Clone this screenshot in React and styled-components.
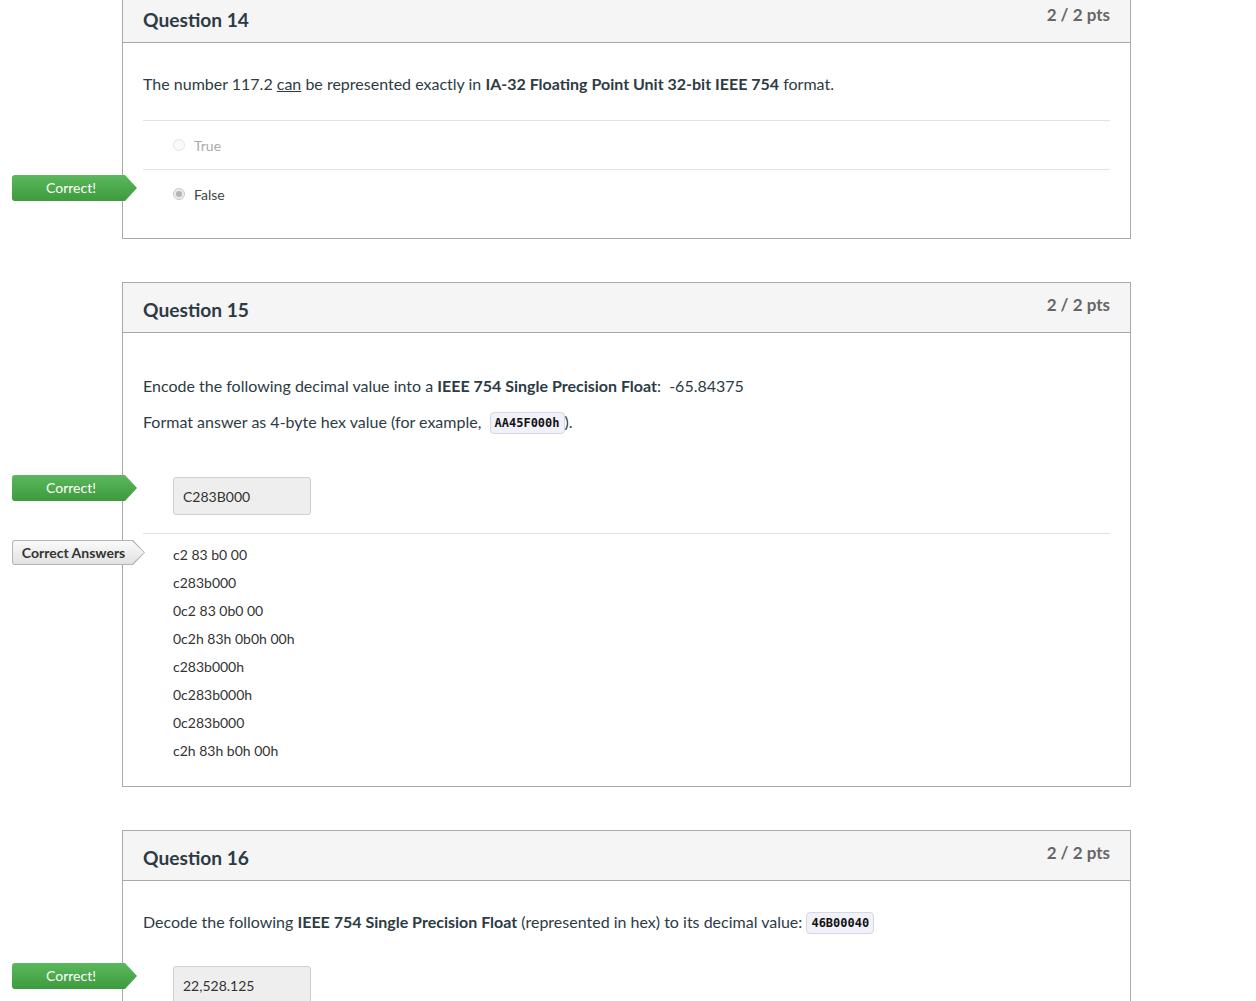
import React from 'react';
import styled, { createGlobalStyle, css } from 'styled-components';

const GlobalStyle = createGlobalStyle`
  body {
    margin: 0;
    background: #fff;
    font-family: Lato, 'Open Sans', 'Liberation Sans', sans-serif;
    color: #2d3b45;
  }
`;

export const Page = styled.div`
  display: flex;
  flex-direction: column;
  gap: 43px;
  margin-top: -8px;
  padding: 0 0 60px 122px;
`;

export const Card = styled.section`
  width: 1007px;
  border: 1px solid #a9a9a9;
  background: #fff;
`;

export const CardHeader = styled.header`
  display: flex;
  justify-content: space-between;
  align-items: flex-start;
  height: 49px;
  padding: 0 20px;
  background: #f5f5f5;
  border-bottom: 1px solid #a9a9a9;
`;

export const Title = styled.h2`
  margin: 0;
  padding-top: 15px;
  font-size: 19.2px;
  line-height: 24px;
  font-weight: 700;
  color: #2d3b45;
`;

export const Points = styled.div`
  padding-top: 12px;
  font-size: 17px;
  line-height: 20px;
  font-weight: 700;
  color: #666;
`;

export const CardBody = styled.div`
  padding: 29px 20px 20px;
`;

export const QuestionText = styled.div`
  display: flow-root;
  font-size: 16px;
  line-height: 24px;

  p {
    margin: 12px 0;
  }
`;

export const Code = styled.code`
  display: inline-block;
  padding: 0 4px;
  font-family: 'DejaVu Sans Mono', 'Liberation Mono', monospace;
  font-size: 12px;
  line-height: 20px;
  font-weight: 700;
  color: #111;
  background: #f1f1f9;
  border: 1px solid #d6d6e4;
  border-radius: 4px;
  vertical-align: 1px;
`;

export const Choices = styled.div`
  margin-top: 24px;
`;

export const Choice = styled.div`
  position: relative;
  display: flex;
  align-items: center;
  gap: 9px;
  height: 48px;
  padding-left: 30px;
  border-top: 1px solid #e2e2e2;
  font-size: 14px;
  color: ${(p) => (p.$picked ? '#444' : '#aaa')};
`;

export const Radio = styled.span`
  position: relative;
  width: 12px;
  height: 12px;
  box-sizing: border-box;
  border-radius: 50%;
  border: 1px solid ${(p) => (p.$checked ? '#c9c9c9' : '#e4e4e4')};
  background: ${(p) => (p.$checked ? '#ececec' : '#fafafa')};

  ${(p) =>
    p.$checked &&
    css`
      &::after {
        content: '';
        position: absolute;
        left: 2px;
        top: 2px;
        width: 6px;
        height: 6px;
        border-radius: 50%;
        background: #b5b5b5;
      }
    `}
`;

export const InputRow = styled.div`
  position: relative;
  margin-top: ${(p) => p.$gap}px;
  padding: 0 0 ${(p) => (p.$divided ? 18 : 0)}px 30px;
  border-bottom: ${(p) => (p.$divided ? '1px solid #e2e2e2' : 'none')};
`;

export const AnswerBox = styled.div`
  width: 138px;
  height: 38px;
  box-sizing: border-box;
  display: flex;
  align-items: center;
  padding-left: 9px;
  font-size: 14px;
  color: #333;
  background: #eeeeee;
  border: 1px solid #cfcfcf;
  border-radius: 3px;
`;

export const AnswerList = styled.ul`
  position: relative;
  list-style: none;
  margin: 0;
  padding: 7px 0 1px 30px;
  font-size: 14px;
  line-height: 28px;
  color: #333;
`;

const arrow = 'polygon(0 0, calc(100% - 12px) 0, 100% 50%, calc(100% - 12px) 100%, 0 100%)';

export const Tag = styled.div`
  position: absolute;
  left: -131px;
  top: ${(p) => p.$top}px;
  width: ${(p) => p.$width}px;
  height: ${(p) => p.$height}px;
  display: flex;
  align-items: center;
  justify-content: center;
  padding-right: ${(p) => (p.$kind === 'correct' ? 7 : 10)}px;
  box-sizing: border-box;
  font-size: 14px;
  line-height: 1;
  border-radius: 3px 0 0 3px;
  clip-path: ${arrow};
  z-index: 2;

  span {
    position: relative;
  }

  ${(p) =>
    p.$kind === 'correct'
      ? css`
          color: #fff;
          background: linear-gradient(#5cb85c, #3d9a3d);
        `
      : css`
          color: #333;
          font-weight: 700;
          background: #b4b4b4;

          &::before {
            content: '';
            position: absolute;
            inset: 1px 1px 1px 1px;
            border-radius: 2px 0 0 2px;
            clip-path: ${arrow};
            background: linear-gradient(#fafafa, #e2e2e2);
          }
        `}
`;

const CorrectTag = ({ top }) => (
  <Tag $kind="correct" $top={top} $width={125} $height={26}>
    <span>Correct!</span>
  </Tag>
);

const answers = [
  'c2 83 b0 00',
  'c283b000',
  '0c2 83 0b0 00',
  '0c2h 83h 0b0h 00h',
  'c283b000h',
  '0c283b000h',
  '0c283b000',
  'c2h 83h b0h 00h',
];

const Header = ({ n }) => (
  <CardHeader>
    <Title>Question {n}</Title>
    <Points>2 / 2 pts</Points>
  </CardHeader>
);

export default function App() {
  return (
    <>
      <GlobalStyle />
      <Page>
        <Card>
          <Header n={14} />
          <CardBody>
            <QuestionText>
              The number 117.2 <u>can</u> be represented exactly in{' '}
              <strong>IA-32 Floating Point Unit 32-bit IEEE 754</strong> format.
            </QuestionText>
            <Choices>
              <Choice>
                <Radio />
                True
              </Choice>
              <Choice $picked>
                <CorrectTag top={5} />
                <Radio $checked />
                False
              </Choice>
            </Choices>
          </CardBody>
        </Card>

        <Card>
          <Header n={15} />
          <CardBody>
            <QuestionText>
              <p>
                Encode the following decimal value into a{' '}
                <strong>IEEE 754 Single Precision Float</strong>:&nbsp; -65.84375
              </p>
              <p>
                Format answer as 4-byte hex value (for example,&nbsp;{' '}
                <Code>AA45F000h</Code>).
              </p>
            </QuestionText>
            <InputRow $gap={31} $divided>
              <CorrectTag top={-2} />
              <AnswerBox>C283B000</AnswerBox>
            </InputRow>
            <AnswerList>
              <Tag $kind="answers" $top={6} $width={133} $height={25}>
                <span>Correct Answers</span>
              </Tag>
              {answers.map((a) => (
                <li key={a}>{a}</li>
              ))}
            </AnswerList>
          </CardBody>
        </Card>

        <Card>
          <Header n={16} />
          <CardBody>
            <QuestionText>
              Decode the following <strong>IEEE 754 Single Precision Float</strong>{' '}
              (represented in hex) to its decimal value: <Code>46B00040</Code>
            </QuestionText>
            <InputRow $gap={32}>
              <CorrectTag top={-3} />
              <AnswerBox>22,528.125</AnswerBox>
            </InputRow>
          </CardBody>
        </Card>
      </Page>
    </>
  );
}
